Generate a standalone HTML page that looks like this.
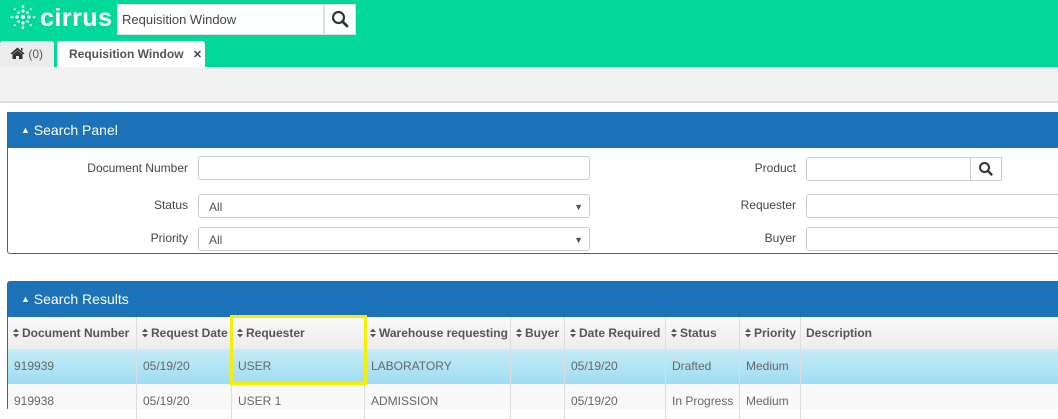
<!DOCTYPE html>
<html><head><style>
*{box-sizing:border-box;margin:0;padding:0}
body{width:1058px;height:409px;overflow:hidden;background:#fff;font-family:"Liberation Sans",sans-serif;font-size:12px;color:#555;position:relative}
.a{position:absolute}
.inp{position:absolute;border:1px solid #ccc;border-radius:3px;background:#fff;height:24px}
.lbl{position:absolute;text-align:right;color:#444;font-size:12px}
.hd{position:absolute;top:317px;height:32px;line-height:32px;font-weight:bold;color:#555;font-size:12px;padding-left:5px;border-right:1px solid #ddd;background:linear-gradient(#fafafa,#ececec);white-space:nowrap;overflow:hidden}
.c{position:absolute;height:35px;line-height:35px;padding-left:6px;border-right:1px solid #ddd;color:#666;white-space:nowrap}
.s{display:inline-block;width:6px;height:10px;margin-right:3px;vertical-align:-1px;background:url() }
</style></head><body>
<svg width="0" height="0" style="position:absolute"><defs><symbol id="srt" viewBox="0 0 6 10"><path d="M0 4 L3 0.5 L6 4Z M0 6 L3 9.5 L6 6Z" fill="#555"/></symbol></defs></svg>
<div class="a" style="left:0;top:0;width:1058px;height:67px;background:#02d899"></div>
<div class="a" style="left:10px;top:5px;color:#fff;font-size:25px;font-weight:bold">
<svg width="26" height="24" viewBox="0 0 26 24" style="vertical-align:-2px"><g fill="#fff"><circle cx="13" cy="12" r="2"/><circle cx="13" cy="6" r="1.6"/><circle cx="13" cy="18" r="1.6"/><circle cx="7" cy="12" r="1.6"/><circle cx="19" cy="12" r="1.6"/><circle cx="13" cy="1.5" r="1.3"/><circle cx="13" cy="22.5" r="1.3"/><circle cx="2" cy="12" r="1.3"/><circle cx="24" cy="12" r="1.3"/><circle cx="8.5" cy="7.5" r="1.3"/><circle cx="17.5" cy="7.5" r="1.3"/><circle cx="8.5" cy="16.5" r="1.3"/><circle cx="17.5" cy="16.5" r="1.3"/><circle cx="5" cy="4" r="1"/><circle cx="21" cy="4" r="1"/><circle cx="5" cy="20" r="1"/><circle cx="21" cy="20" r="1"/></g></svg><span style="position:relative;top:-1px;margin-left:4px;letter-spacing:0.5px">cirrus</span></div>
<div class="a" style="left:117px;top:4px;width:207px;height:31px;background:#fff;border:1px solid #ddd;line-height:30px;padding-left:4px;font-size:13px;color:#444">Requisition Window</div>
<div class="a" style="left:324px;top:4px;width:32px;height:31px;background:#fff;border:1px solid #ddd"><svg width="30" height="29" viewBox="0 0 30 29"><circle cx="13.5" cy="12.5" r="5.5" fill="none" stroke="#333" stroke-width="2.2"/><line x1="17.5" y1="16.5" x2="22" y2="21" stroke="#333" stroke-width="2.8" stroke-linecap="round"/></svg></div>
<div class="a" style="left:0;top:41px;width:54px;height:26px;background:#ececec;border-radius:3px 3px 0 0;line-height:26px;padding-left:10px;color:#555"><svg width="15" height="12" viewBox="0 0 15 12" style="vertical-align:-1px"><path d="M7.5 0.5 L0.5 6.5 L2 7.5 L7.5 3 L13 7.5 L14.5 6.5Z M2.5 7.5 L7.5 3.5 L12.5 7.5 V12 H9 V9 H6 V12 H2.5Z M11 1 H12.5 V4 L11 3Z" fill="#333"/></svg> (0)</div>
<div class="a" style="left:57px;top:41px;width:148px;height:26px;background:#fff;border-radius:3px 3px 0 0;line-height:26px;padding-left:12px;font-weight:bold;color:#555">Requisition Window <span style="margin-left:6px;color:#444;font-size:11px">✕</span></div>
<div class="a" style="left:0;top:67px;width:1058px;height:36px;background:#f2f2f2;border-bottom:2px solid #ddd"></div>

<div class="a" style="left:7px;top:112px;width:1060px;height:142px;border:1px solid #1c72b8;border-radius:3px"></div>
<div class="a" style="left:7px;top:112px;width:1060px;height:36px;background:#1c72b8;color:#fff;font-size:14px;line-height:36px;padding-left:14px"><span style="font-size:9px;vertical-align:2px">▲</span> Search Panel</div>
<div class="lbl" style="left:40px;width:148px;top:161px">Document Number</div>
<div class="inp" style="left:198px;top:156px;width:392px"></div>
<div class="lbl" style="left:40px;width:148px;top:198px">Status</div>
<div class="inp" style="left:198px;top:194px;width:392px;line-height:24px;padding-left:10px;color:#555">All<span style="position:absolute;right:6px;font-size:9px">▼</span></div>
<div class="lbl" style="left:40px;width:148px;top:231px">Priority</div>
<div class="inp" style="left:198px;top:227px;width:392px;line-height:24px;padding-left:10px;color:#555">All<span style="position:absolute;right:6px;font-size:9px">▼</span></div>
<div class="lbl" style="left:650px;width:146px;top:161px">Product</div>
<div class="inp" style="left:806px;top:157px;width:196px;border-radius:3px"></div>
<div class="a" style="left:970px;top:157px;width:32px;height:24px;border:1px solid #ccc;background:#fff"><svg width="30" height="22" viewBox="0 0 30 22"><circle cx="13.5" cy="9.5" r="4.5" fill="none" stroke="#333" stroke-width="2"/><line x1="17" y1="13" x2="20.5" y2="16.5" stroke="#333" stroke-width="2.4" stroke-linecap="round"/></svg></div>
<div class="lbl" style="left:650px;width:146px;top:198px">Requester</div>
<div class="inp" style="left:806px;top:194px;width:260px"></div>
<div class="lbl" style="left:650px;width:146px;top:231px">Buyer</div>
<div class="inp" style="left:806px;top:227px;width:260px"></div>

<div class="a" style="left:7px;top:281px;width:1060px;height:36px;background:#1c72b8;color:#fff;font-size:14px;line-height:36px;padding-left:14px;border-radius:3px 3px 0 0"><span style="font-size:9px;vertical-align:2px">▲</span> Search Results</div>
<div class="a" style="left:7px;top:317px;width:1px;height:92px;background:#1c72b8"></div>
<div class="hd" style="left:8px;width:129px"><svg class="s"><use href="#srt"/></svg>Document Number</div>
<div class="hd" style="left:137px;width:95px"><svg class="s"><use href="#srt"/></svg>Request Date</div>
<div class="hd" style="left:232px;width:133px"><svg class="s"><use href="#srt"/></svg>Requester</div>
<div class="hd" style="left:365px;width:146px"><svg class="s"><use href="#srt"/></svg>Warehouse requesting</div>
<div class="hd" style="left:511px;width:54px"><svg class="s"><use href="#srt"/></svg>Buyer</div>
<div class="hd" style="left:565px;width:101px"><svg class="s"><use href="#srt"/></svg>Date Required</div>
<div class="hd" style="left:666px;width:74px"><svg class="s"><use href="#srt"/></svg>Status</div>
<div class="hd" style="left:740px;width:61px"><svg class="s"><use href="#srt"/></svg>Priority</div>
<div class="hd" style="left:801px;width:260px">Description</div>
<div class="a" style="left:8px;top:349px;width:1060px;height:35px;background:linear-gradient(#c6ecf7,#9fdcf2)"></div>
<div class="a" style="left:8px;top:384px;width:1060px;height:25px;background:#f9f9f9"></div>
<div class="c" style="left:8px;top:349px;width:129px">919939</div>
<div class="c" style="left:137px;top:349px;width:95px">05/19/20</div>
<div class="c" style="left:232px;top:349px;width:133px">USER</div>
<div class="c" style="left:365px;top:349px;width:146px">LABORATORY</div>
<div class="c" style="left:511px;top:349px;width:54px"></div>
<div class="c" style="left:565px;top:349px;width:101px">05/19/20</div>
<div class="c" style="left:666px;top:349px;width:74px">Drafted</div>
<div class="c" style="left:740px;top:349px;width:61px">Medium</div>
<div class="c" style="left:8px;top:384px;width:129px">919938</div>
<div class="c" style="left:137px;top:384px;width:95px">05/19/20</div>
<div class="c" style="left:232px;top:384px;width:133px">USER 1</div>
<div class="c" style="left:365px;top:384px;width:146px">ADMISSION</div>
<div class="c" style="left:511px;top:384px;width:54px"></div>
<div class="c" style="left:565px;top:384px;width:101px">05/19/20</div>
<div class="c" style="left:666px;top:384px;width:74px">In Progress</div>
<div class="c" style="left:740px;top:384px;width:61px">Medium</div>
<div class="a" style="left:230px;top:315px;width:137px;height:70px;border:3px solid #f5f000"></div>
</body></html>
